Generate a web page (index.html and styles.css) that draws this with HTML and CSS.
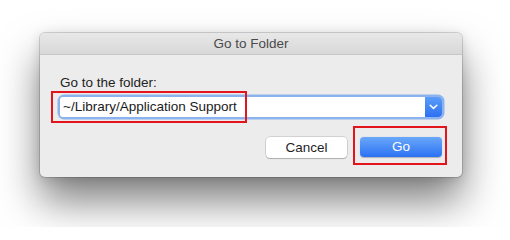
FILE: index.html
```html
<!DOCTYPE html>
<html>
<head>
<meta charset="utf-8">
<link rel="stylesheet" href="styles.css">
</head>
<body>
<div class="window">
  <div class="titlebar">Go to Folder</div>
  <div class="content">
    <div class="label">Go to the folder:</div>
    <div class="combo">
      <div class="field">~/Library/Application Support</div>
      <div class="arrow">
        <svg width="9" height="6" viewBox="0 0 9 6"><polyline points="1.2,1.2 4.5,4.4 7.8,1.2" fill="none" stroke="#fff" stroke-width="1.5" stroke-linecap="round" stroke-linejoin="round"/></svg>
      </div>
    </div>
    <div class="buttons">
      <div class="btn cancel">Cancel</div>
      <div class="btn go">Go</div>
    </div>
  </div>
  <div class="mark mark-input"></div>
  <div class="mark mark-go"></div>
</div>
</body>
</html>
```

FILE: styles.css
```css
html, body {
  margin: 0;
  padding: 0;
  background: #ffffff;
}
body {
  min-height: 227px;
  padding-top: 1px;
  box-sizing: border-box;
  font-family: "Liberation Sans", Arial, sans-serif;
  font-size: 13.5px;
  color: #1f1f1f;
}
.window {
  position: relative;
  margin: 32px 0 0 40px;
  width: 422px;
  height: 144px;
  box-sizing: border-box;
  border-radius: 5px;
  background: #ececec;
  box-shadow: 0 0 0 1px rgba(0,0,0,0.14), 0 24px 40px rgba(0,0,0,0.5), 0 2px 12px rgba(0,0,0,0.14);
}
.titlebar {
  height: 21px;
  line-height: 22px;
  border-bottom: 1px solid #c8c8c8;
  border-radius: 5px 5px 0 0;
  background: linear-gradient(#e8e8e8, #d8d8d8);
  text-align: center;
  color: #4a4a4a;
  font-size: 13.5px;
}
.content {
  padding: 20px 20px 0 20px;
}
.label {
  height: 16px;
  line-height: 16px;
  color: #222;
  margin-bottom: 6px;
}
.combo {
  display: flex;
  height: 20px;
  border-radius: 4px;
  box-shadow: 0 0 0 2.5px rgba(110, 160, 240, 0.75);
}
.field {
  flex: 1;
  background: #fff;
  border-radius: 3px 0 0 3px;
  line-height: 20px;
  padding-left: 3px;
  color: #1a1a1a;
}
.arrow {
  width: 17px;
  display: flex;
  align-items: center;
  justify-content: center;
  border-radius: 0 4px 4px 0;
  background: linear-gradient(#5b9df8, #2d70f2);
}
.buttons {
  display: flex;
  justify-content: flex-end;
  gap: 13px;
  margin-top: 20px;
}
.btn {
  width: 81px;
  height: 21px;
  line-height: 21px;
  border-radius: 4px;
  text-align: center;
}
.cancel {
  background: #ffffff;
  color: #1f1f1f;
  box-shadow: 0 0 0 0.5px rgba(0,0,0,0.22), 0 1px 1px rgba(0,0,0,0.18);
}
.go {
  width: 82px;
  height: 20px;
  line-height: 20px;
  background: linear-gradient(#6aa8fa, #2b72f3);
  color: #ffffff;
  box-shadow: 0 0.5px 1px rgba(0,0,0,0.25);
}
.mark {
  position: absolute;
  box-sizing: border-box;
  border: 2px solid #e3141c;
}
.mark-input {
  left: 11px;
  top: 58px;
  width: 196px;
  height: 32px;
}
.mark-go {
  left: 313px;
  top: 93px;
  width: 94px;
  height: 39px;
}
```
